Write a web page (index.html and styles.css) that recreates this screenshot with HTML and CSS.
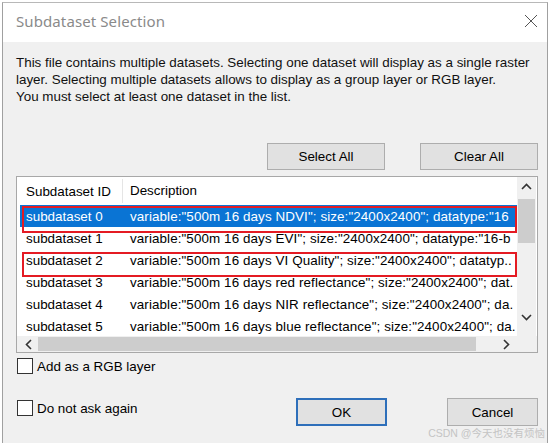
FILE: index.html
```html
<!DOCTYPE html>
<html>
<head>
<meta charset="utf-8">
<link rel="stylesheet" href="styles.css">
</head>
<body>
<div class="window">
  <div class="titlebar">
    <span class="title">Subdataset Selection</span>
    <svg class="close" width="14" height="14" viewBox="0 0 14 14"><path d="M1 1L13 13M13 1L1 13" stroke="#555" stroke-width="1" fill="none"/></svg>
  </div>
  <div class="content">
    <p class="desc">This file contains multiple datasets. Selecting one dataset will display as a single raster<br>layer. Selecting multiple datasets allows to display as a group layer or RGB layer.<br>You must select at least one dataset in the list.</p>
    <div class="toprow">
      <button class="btn wide">Select All</button>
      <button class="btn wide">Clear All</button>
    </div>
    <div class="list">
      <div class="listmain">
        <div class="grid">
          <div class="hdr"><div class="c1">Subdataset ID</div><div class="c2 hc2">Description</div></div>
          <div class="row sel"><div class="c1">subdataset 0</div><div class="c2">variable:"500m 16 days NDVI"; size:"2400x2400"; datatype:"16</div></div>
          <div class="row"><div class="c1">subdataset 1</div><div class="c2">variable:"500m 16 days EVI"; size:"2400x2400"; datatype:"16-b</div></div>
          <div class="row"><div class="c1">subdataset 2</div><div class="c2">variable:"500m 16 days VI Quality"; size:"2400x2400"; datatyp..</div></div>
          <div class="row"><div class="c1">subdataset 3</div><div class="c2">variable:"500m 16 days red reflectance"; size:"2400x2400"; dat.</div></div>
          <div class="row"><div class="c1">subdataset 4</div><div class="c2">variable:"500m 16 days NIR reflectance"; size:"2400x2400"; da.</div></div>
          <div class="row"><div class="c1">subdataset 5</div><div class="c2">variable:"500m 16 days blue reflectance"; size:"2400x2400"; da.</div></div>
        </div>
        <div class="vscroll">
          <svg class="arrow" width="19" height="20" viewBox="0 0 19 20"><path d="M5 12L9.5 7.5L14 12" stroke="#333" stroke-width="1.6" fill="none"/></svg>
          <div class="vthumb"></div>
          <div class="vspace"></div>
          <svg class="arrow down" width="19" height="20" viewBox="0 0 19 20"><path d="M5 8L9.5 12.5L14 8" stroke="#333" stroke-width="1.6" fill="none"/></svg>
        </div>
      </div>
      <div class="hbar">
        <div class="hscroll">
          <svg class="harrow" width="20" height="15" viewBox="0 0 20 15"><path d="M13 3L8.5 7.5L13 12" stroke="#333" stroke-width="1.6" fill="none"/></svg>
          <div class="hthumb"></div>
          <div class="hspace"></div>
          <svg class="harrow" width="20" height="15" viewBox="0 0 20 15"><path d="M7 3L11.5 7.5L7 12" stroke="#333" stroke-width="1.6" fill="none"/></svg>
        </div>
        <div class="corner"></div>
      </div>
    </div>
    <label class="chk first"><span class="box"></span><span>Add as a RGB layer</span></label>
    <div class="bottomrow">
      <label class="chk"><span class="box"></span><span>Do not ask again</span></label>
      <div class="btns">
        <button class="btn ok">OK</button>
        <button class="btn">Cancel</button>
      </div>
    </div>
  </div>
  <div class="mark mark0"></div>
  <div class="mark mark2"></div>
  <div class="watermark">CSDN @今天也没有烦恼</div>
</div>
</body>
</html>
```

FILE: styles.css
```css
* { box-sizing: border-box; }
html, body { margin: 0; padding: 0; }
body {
  background: #ffffff;
  width: 549px;
  height: 443px;
  overflow: hidden;
  font-family: "Liberation Sans", Arial, sans-serif;
  font-size: 13.4px;
  color: #000;
}
.window {
  position: relative;
  margin: 2px 0 0 2px;
  width: 546px;
  height: 441px;
  border-left: 1px solid #a0a0a0;
  border-top: 1px solid #b8b8b8;
  border-right: 1px solid #a0a0a0;
  background: #f0f0f0;
  display: flex;
  flex-direction: column;
}
.titlebar {
  height: 39px;
  background: #ffffff;
  display: flex;
  align-items: center;
  justify-content: space-between;
  padding: 0 9px 0 13px;
}
.title {
  font-family: "Noto Sans", "Open Sans", sans-serif;
  font-size: 15px;
  color: #8a8a8a;
  letter-spacing: 0.1px;
  margin-top: -3px;
}
.close { margin-top: -3px; }
.content {
  padding: 12px 9px 0 13px;
  display: flex;
  flex-direction: column;
}
.desc {
  margin: 0;
  line-height: 17px;
  color: #111;
}
.toprow {
  margin-top: 38px;
  display: flex;
  justify-content: flex-end;
  gap: 35px;
}
.btn {
  font-family: "Liberation Sans", Arial, sans-serif;
  font-size: 13.4px;
  color: #000;
  background: #e1e1e1;
  border: 1px solid #adadad;
  height: 28px;
  width: 91px;
  padding: 0;
  margin: 0;
}
.btn.wide { width: 118px; height: 27px; }
.btn.ok {
  border: 2px solid #2e6fba;
}
.list {
  margin-top: 6px;
  border: 1px solid #a8a8a8;
  background: #fff;
  height: 177px;
  display: flex;
  flex-direction: column;
}
.listmain {
  display: flex;
  height: 159px;
}
.grid {
  width: 500px;
  overflow: hidden;
}
.hdr, .row {
  display: flex;
  white-space: nowrap;
}
.hdr {
  height: 28px;
  align-items: center;
}
.row {
  height: 22px;
  align-items: center;
}
.c1 {
  width: 105px;
  flex: none;
  padding-left: 9px;
}
.c2 {
  flex: 1;
  overflow: hidden;
  padding-left: 8px;
}
.row .c2 { letter-spacing: 0.1px; }
.hc2 {
  border-left: 1px solid #e5e5e5;
  height: 24px;
  line-height: 24px;
  padding-left: 7px;
}
.row.sel {
  background: linear-gradient(to right, #fff 0, #fff 3px, #0a74d4 3px);
  color: #fff;
}
.vscroll {
  width: 19px;
  background: #f0f0f0;
  display: flex;
  flex-direction: column;
  align-items: center;
}
.arrow { flex: none; }
.arrow.down { margin-bottom: 9px; }
.vthumb {
  margin-top: 2px;
  width: 17px;
  height: 44px;
  background: #cdcdcd;
}
.vspace { flex: 1; }
.hbar {
  display: flex;
  height: 16px;
}
.hscroll {
  width: 500px;
  background: #f0f0f0;
  display: flex;
  align-items: center;
}
.harrow { flex: none; margin-left: 1px; }
.hthumb {
  width: 438px;
  height: 14px;
  background: #cdcdcd;
}
.hspace { flex: 1; }
.corner {
  flex: 1;
  background: #f0f0f0;
}
.chk {
  display: flex;
  align-items: center;
  height: 16px;
  gap: 4px;
  padding-left: 1px;
}
.chk.first { margin-top: 5px; }
.box {
  width: 16px;
  height: 16px;
  border: 1px solid #333;
  background: #fff;
  flex: none;
}
.bottomrow {
  margin-top: 24px;
  display: flex;
  justify-content: space-between;
  align-items: flex-start;
}
.bottomrow .chk { margin-top: 2px; }
.btns {
  display: flex;
  gap: 60px;
}
.mark {
  position: absolute;
  border: 2px solid #e41b23;
}
.mark0 { left: 19px; top: 203px; width: 495px; height: 27px; }
.mark2 { left: 19px; top: 249px; width: 495px; height: 25px; }
.watermark {
  position: absolute;
  right: 2px;
  bottom: 3px;
  font-family: "Liberation Sans", "Noto Sans CJK SC", sans-serif;
  font-size: 10.5px;
  color: #c4c4c4;
}
```
